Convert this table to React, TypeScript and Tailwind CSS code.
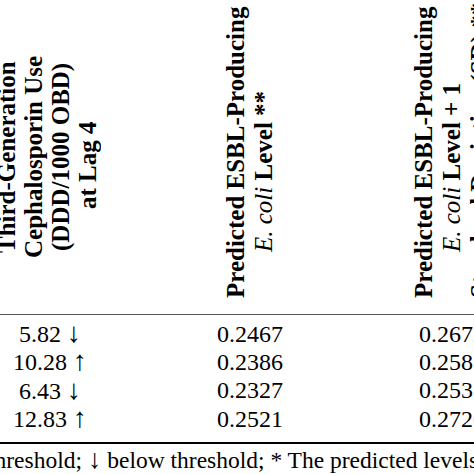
import clsx from "clsx";

const rows = [
  { use: "5.82", arrow: "↓", level: "0.2467", next: "0.2672" },
  { use: "10.28", arrow: "↑", level: "0.2386", next: "0.2585" },
  { use: "6.43", arrow: "↓", level: "0.2327", next: "0.2533" },
  { use: "12.83", arrow: "↑", level: "0.2521", next: "0.2726" },
];

const Line = ({ children, className }: { children: React.ReactNode; className?: string }) => (
  <div className={clsx("whitespace-nowrap", className)}>{children}</div>
);

const App = () => {
  return (
    <div className="w-[474px] h-[474px] overflow-hidden bg-white text-black font-['Liberation_Serif','Times_New_Roman',serif]">
      <div className="w-[504px]">
        {/* header, labels read bottom to top */}
        <div className="flex h-[314px] text-[25px] font-bold">
          <div className="flex w-[100px] shrink-0 items-center justify-center pr-[6px]">
            <div className="h-[230px] [writing-mode:vertical-rl] rotate-180 text-center leading-[27px]">
              <Line>Third-Generation</Line>
              <Line>Cephalosporin Use</Line>
              <Line>(DDD/1000 OBD)</Line>
              <Line className="pe-[16px]">at Lag 4</Line>
            </div>
          </div>
          <div className="flex w-[300px] shrink-0 items-end justify-center pb-[16px]">
            <div className="h-[296px] [writing-mode:vertical-rl] rotate-180 text-start leading-[28px]">
              <Line>Predicted ESBL-Producing</Line>
              <Line className="ps-[46px]">
                <i className="font-normal">E. coli</i> Level **
              </Line>
            </div>
          </div>
          <div className="flex w-[104px] shrink-0 items-end justify-center pb-[16px]">
            <div className="h-[296px] [writing-mode:vertical-rl] rotate-180 text-start leading-[28px]">
              <Line>Predicted ESBL-Producing</Line>
              <Line className="ps-[46px]">
                <i className="font-normal">E. coli</i> Level + 1
              </Line>
              <Line>Standard Deviation (SD) **</Line>
            </div>
          </div>
        </div>

        {/* body */}
        <div className="border-t-[1.5px] border-[#555] border-b-2 border-b-black pt-[4.5px] pb-[9px] text-[24px] leading-[28px]">
          {rows.map((row) => (
            <div key={row.use} className="flex h-[28.3px] items-center">
              <div className="w-[100px] shrink-0 text-center whitespace-nowrap">
                {row.use} <span className="text-[28px] leading-none">{row.arrow}</span>
              </div>
              <div className="w-[300px] shrink-0 text-center">{row.level}</div>
              <div className="w-[104px] shrink-0 text-center">{row.next}</div>
            </div>
          ))}
        </div>

        <div className="mt-[2px] ml-[-12px] whitespace-nowrap text-[23.5px] leading-[28px]">
          threshold; <span className="text-[27px] leading-none">↓</span> below threshold; * The predicted levels of
          ESBL-producing E. coli
        </div>
      </div>
    </div>
  );
};

export default App;
